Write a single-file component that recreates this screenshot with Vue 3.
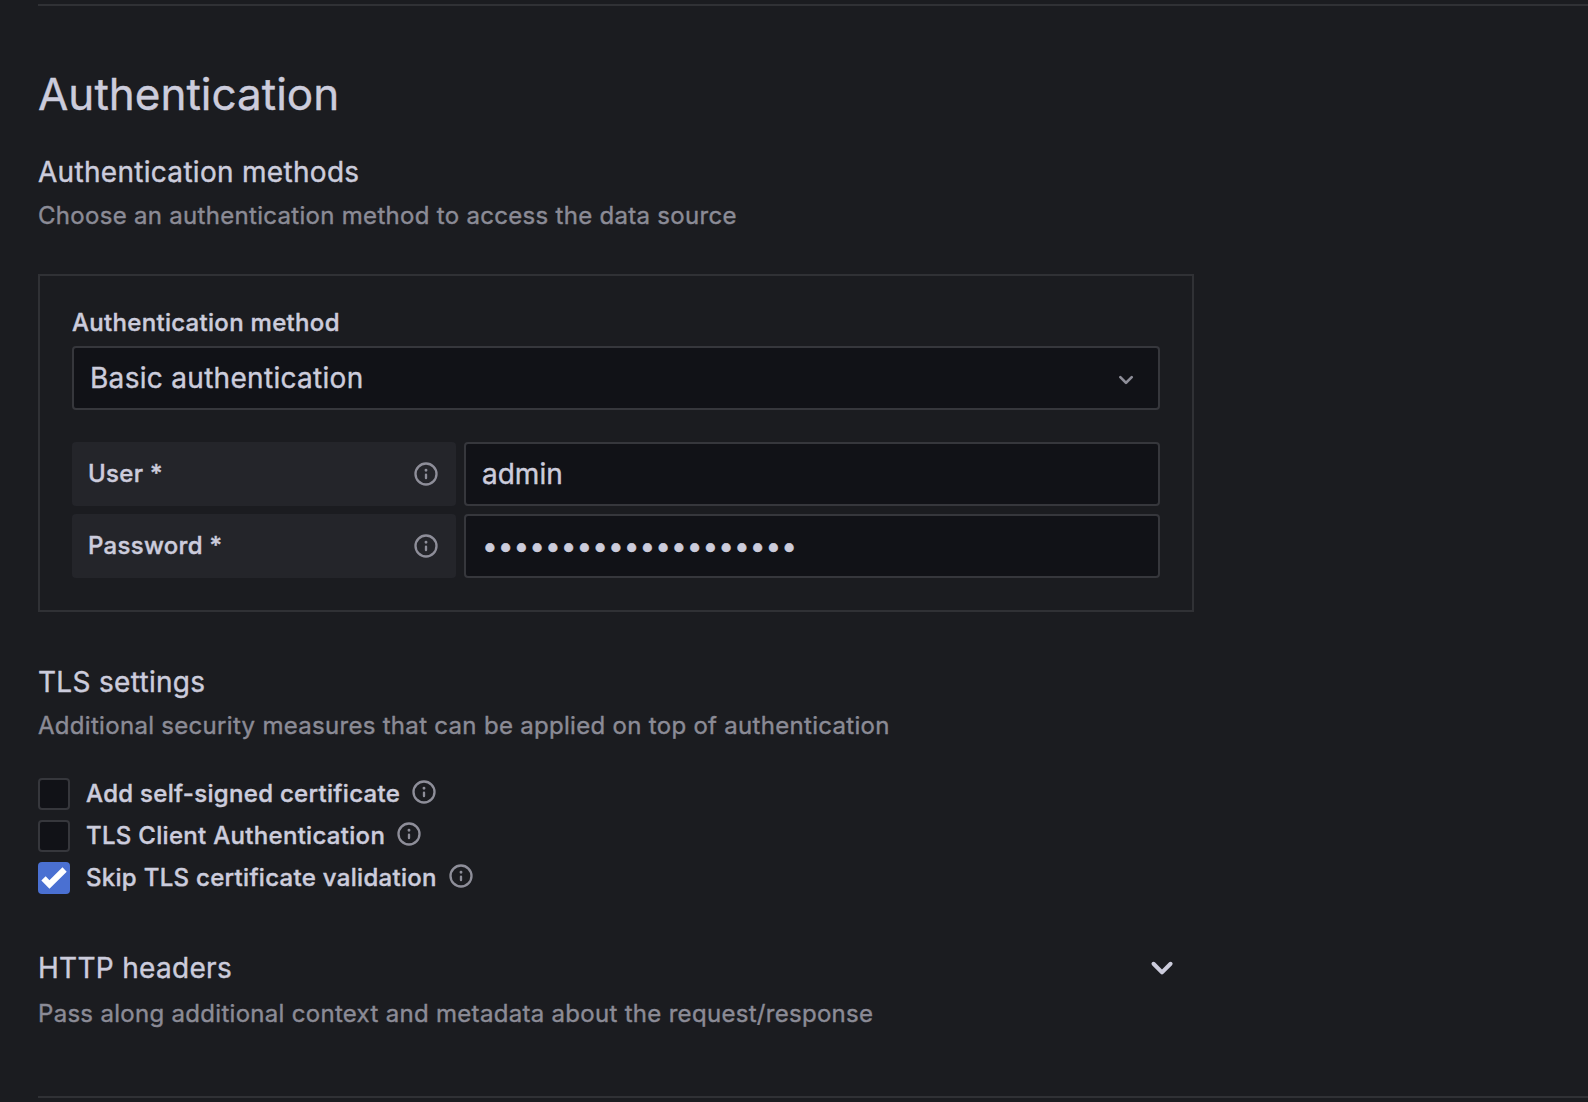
<script setup>
import { ref } from 'vue'

const method = ref('Basic authentication')
const user = ref('admin')
const password = ref('abcdefghijklmnopqrst')

const tlsOptions = ref([
  { id: 'self-signed', label: 'Add self-signed certificate', checked: false },
  { id: 'client-auth', label: 'TLS Client Authentication', checked: false },
  { id: 'skip-verify', label: 'Skip TLS certificate validation', checked: true },
])

// icon paths (24x24)
const infoPath = 'M12,2A10,10,0,1,0,22,12,10.01114,10.01114,0,0,0,12,2Zm0,18a8,8,0,1,1,8-8A8.00917,8.00917,0,0,1,12,20Zm0-8.5a1,1,0,0,0-1,1v3a1,1,0,0,0,2,0v-3A1,1,0,0,0,12,11.5Zm0-4a1.25,1.25,0,1,0,1.25,1.25A1.25,1.25,0,0,0,12,7.5Z'
const anglePath = 'M17,9.17a1,1,0,0,0-1.41,0L12,12.71,8.46,9.17a1,1,0,0,0-1.41,0,1,1,0,0,0,0,1.42l4.24,4.24a1,1,0,0,0,1.42,0L17,10.59A1,1,0,0,0,17,9.17Z'
</script>

<template>
  <div class="page">
    <div class="divider"></div>

    <h2 class="title">Authentication</h2>

    <section class="methods">
      <h3 class="heading">Authentication methods</h3>
      <p class="description">Choose an authentication method to access the data source</p>

      <div class="box">
        <label class="field-label">Authentication method</label>
        <div class="select">
          <span>{{ method }}</span>
          <svg class="select-arrow" viewBox="0 0 24 24"><path :d="anglePath" /></svg>
        </div>

        <div class="row">
          <div class="inline-label">
            <span>User *</span>
            <svg class="info" viewBox="0 0 24 24"><path :d="infoPath" /></svg>
          </div>
          <input v-model="user" class="input" type="text">
        </div>
        <div class="row">
          <div class="inline-label">
            <span>Password *</span>
            <svg class="info" viewBox="0 0 24 24"><path :d="infoPath" /></svg>
          </div>
          <input v-model="password" class="input" type="password">
        </div>
      </div>
    </section>

    <section class="tls">
      <h3 class="heading">TLS settings</h3>
      <p class="description">Additional security measures that can be applied on top of authentication</p>

      <div class="checks">
        <label v-for="opt in tlsOptions" :key="opt.id" class="check-row" @click="opt.checked = !opt.checked">
          <span class="checkbox" :class="{ checked: opt.checked }">
            <svg v-if="opt.checked" viewBox="0 0 32 32"><path d="M5.5 16.4 11.5 22.5 26.6 7.5" /></svg>
          </span>
          <span class="check-text">{{ opt.label }}</span>
          <svg class="info" viewBox="0 0 24 24"><path :d="infoPath" /></svg>
        </label>
      </div>
    </section>

    <section class="headers">
      <div class="headers-top">
        <h3 class="heading">HTTP headers</h3>
        <svg class="collapse" viewBox="0 0 24 24"><path :d="anglePath" /></svg>
      </div>
      <p class="description">Pass along additional context and metadata about the request/response</p>
    </section>

    <div class="divider"></div>
  </div>
</template>

<style>
body {
  background: #1b1c20;
}
</style>

<style scoped>
.page {
  box-sizing: border-box;
  height: 1102px;
  padding: 4px 0 0 38px;
  overflow: hidden;
  background: #1b1c20;
  color: #ccccdc;
  font-family: Inter, sans-serif;
  font-size: 28px;
  -webkit-text-stroke: 0.4px currentColor;
}

h2, h3, p {
  margin: 0;
  font-weight: 400;
}

svg {
  display: block;
  fill: currentColor;
}

.divider {
  height: 2px;
  background: #303135;
}

.title {
  margin-top: 64px;
  font-size: 44px;
  line-height: 48px;
}

.heading {
  font-size: 28px;
  line-height: 36px;
  letter-spacing: 0.3px;
}

.description {
  margin-top: 8px;
  color: #8b8b96;
  font-size: 24px;
  line-height: 36px;
  letter-spacing: 0.3px;
}

.methods {
  margin-top: 36px;
}

.box {
  box-sizing: border-box;
  width: 1156px;
  margin-top: 40px;
  padding: 32px;
  border: 2px solid #303135;
}

.field-label {
  display: block;
  margin-bottom: 8px;
  font-size: 24px;
  font-weight: 500;
  line-height: 30px;
  letter-spacing: 0.3px;
}

/* select */
.select {
  display: flex;
  box-sizing: border-box;
  height: 64px;
  margin-bottom: 32px;
  padding: 0 16px;
  align-items: center;
  justify-content: space-between;
  background: #111217;
  border: 2px solid #36373c;
  border-radius: 4px;
  letter-spacing: 0.3px;
}

.select-arrow {
  width: 32px;
  height: 32px;
  margin-top: 4px;
  color: #8e8e99;
}

/* user / password rows */
.row {
  display: flex;
  gap: 8px;
}

.row + .row {
  margin-top: 8px;
}

.inline-label {
  display: flex;
  box-sizing: border-box;
  width: 384px;
  height: 64px;
  padding: 0 16px;
  align-items: center;
  justify-content: space-between;
  background: #24252a;
  border-radius: 4px;
  font-size: 24px;
  font-weight: 500;
  letter-spacing: 0.3px;
}

.inline-label span {
  padding-bottom: 2px;
}

.info {
  width: 28px;
  height: 28px;
  color: #8e8e99;
}

.input {
  flex: 1;
  box-sizing: border-box;
  min-width: 0;
  height: 64px;
  padding: 0 16px;
  background: #111217;
  border: 2px solid #36373c;
  border-radius: 4px;
  outline: none;
  color: #ccccdc;
  font-family: inherit;
  font-size: 28px;
}

/* checkboxes */
.tls {
  margin-top: 52px;
}

.checks {
  display: flex;
  flex-direction: column;
  gap: 10px;
  margin-top: 34px;
}

.check-row {
  display: flex;
  height: 32px;
  align-items: center;
}

.checkbox {
  box-sizing: border-box;
  width: 32px;
  height: 32px;
  margin-right: 16px;
  background: #111217;
  border: 2px solid #36373c;
  border-radius: 4px;
}

.checkbox.checked {
  background: #4a70d2;
  border: none;
}

.checkbox path {
  fill: none;
  stroke: #fff;
  stroke-width: 6;
}

.check-text {
  font-size: 24px;
  font-weight: 500;
  line-height: 32px;
  letter-spacing: 0.3px;
}

.check-row .info {
  margin: 0 0 4px 10px;
}

/* http headers */
.headers {
  margin: 56px 0 64px;
}

.headers-top {
  display: flex;
  width: 1148px;
  height: 36px;
  align-items: center;
  justify-content: space-between;
}

.headers .description {
  margin-top: 10px;
}

.collapse {
  width: 48px;
  height: 48px;
}
</style>
